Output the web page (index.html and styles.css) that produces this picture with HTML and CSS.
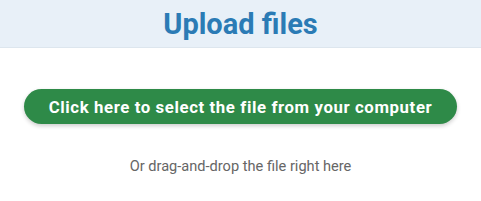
FILE: index.html
```html
<!DOCTYPE html>
<html lang="en">
<head>
    <meta charset="UTF-8">
    <title>Upload files</title>
    <link rel="stylesheet" href="styles.css">
</head>
<body>

    <div id="upload">
        <!--标题区域-->
        <div class="head">
            <h1>Upload files</h1>
        </div>

        <!--选择文件区域-->
        <div class="body">
            <button class="pick">Click here to select the file from your computer</button>
            <p class="hint">Or drag-and-drop the file right here</p>
        </div>
    </div>

</body>
</html>
```

FILE: styles.css
```css
*{margin:0;padding:0;}

body{
    background-color: #fff;
    font-family: Roboto, "Liberation Sans", sans-serif;
}

#upload div.head{
    height: 47px;
    background-color: #e8f0f8;
    border-bottom: 1px solid #dde6ee;

    display: flex;
    align-items: center;
    justify-content: center;
}
#upload div.head h1{
    color: #2b7bb5;
    font-size: 29px;
    font-weight: 700;
    line-height: 1;
    margin-top: 2px;
}

#upload div.body{
    display: flex;
    flex-direction: column;
    align-items: center;
    padding-top: 41px;
}
#upload button.pick{
    width: 433px;
    height: 35px;
    border: none;
    border-radius: 18px;
    background-color: #2e8a48;
    box-shadow: 0 2px 4px rgba(0,0,0,.2);

    color: #fff;
    font-family: Roboto, "Liberation Sans", sans-serif;
    font-size: 16.8px;
    font-weight: 700;
    letter-spacing: .6px;
    cursor: pointer;
}
#upload p.hint{
    margin-top: 33px;
    color: #666;
    font-size: 14.6px;
}
```
